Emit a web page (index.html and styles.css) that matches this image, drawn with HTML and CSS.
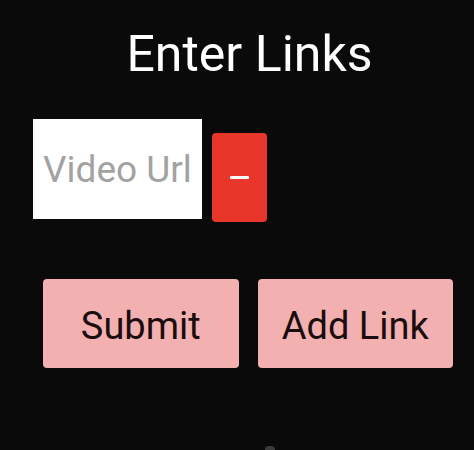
FILE: index.html
```html
<!DOCTYPE html>
<html lang="en">
<head>
<meta charset="utf-8">
<title>Enter Links</title>
<link rel="stylesheet" href="styles.css">
</head>
<body>
<div class="app">
  <h1 class="title">Enter Links</h1>
  <div class="link-row">
    <input class="url-input" type="text" placeholder="Video Url">
    <button class="remove-btn" type="button" aria-label="Remove"><span class="minus"></span></button>
  </div>
  <div class="actions">
    <button class="action-btn" type="button">Submit</button>
    <button class="action-btn" type="button">Add Link</button>
  </div>
  <div class="handle"></div>
</div>
</body>
</html>
```

FILE: styles.css
```css
html, body {
  margin: 0;
  padding: 0;
  background: #0a0a0a;
}
body {
  width: 474px;
  height: 450px;
  overflow: hidden;
  font-family: Roboto, "Liberation Sans", sans-serif;
}
.app {
  display: flex;
  flex-direction: column;
}
.title {
  margin: 24px 0 0 0;
  padding: 0 21px 0 46px;
  font-size: 50px;
  font-weight: 400;
  line-height: 60px;
  color: #ffffff;
  text-align: center;
}
.link-row {
  display: flex;
  align-items: flex-start;
  gap: 10px;
  margin-top: 35px;
  padding-left: 33px;
}
.url-input {
  box-sizing: border-box;
  width: 169px;
  height: 100px;
  margin: 0;
  padding: 0 0 0 10px;
  border: none;
  outline: none;
  background: #ffffff;
  font-family: Roboto, "Liberation Sans", sans-serif;
  font-size: 37px;
  color: #222;
}
.url-input::placeholder {
  color: #a2a2a2;
  opacity: 1;
}
.remove-btn {
  box-sizing: border-box;
  width: 55px;
  height: 89px;
  margin: 14px 0 0 0;
  padding: 0;
  border: none;
  border-radius: 4px;
  background: #e8362a;
  display: flex;
  align-items: center;
  justify-content: center;
}
.minus {
  display: block;
  width: 19px;
  height: 3px;
  border-radius: 1px;
  background: #ffffff;
}
.actions {
  display: flex;
  gap: 19px;
  margin-top: 57px;
  padding: 0 21px 0 43px;
}
.action-btn {
  flex: 1;
  height: 89px;
  margin: 0;
  padding: 4px 0 0 0;
  border: none;
  border-radius: 4px;
  background: #f2b0b1;
  color: #1b0d0d;
  font-family: Roboto, "Liberation Sans", sans-serif;
  font-size: 38px;
  font-weight: 400;
}
.handle {
  width: 10px;
  height: 4px;
  margin: 78px 0 0 265px;
  border-radius: 4px 4px 0 0;
  background: #3a3a3a;
}
```
